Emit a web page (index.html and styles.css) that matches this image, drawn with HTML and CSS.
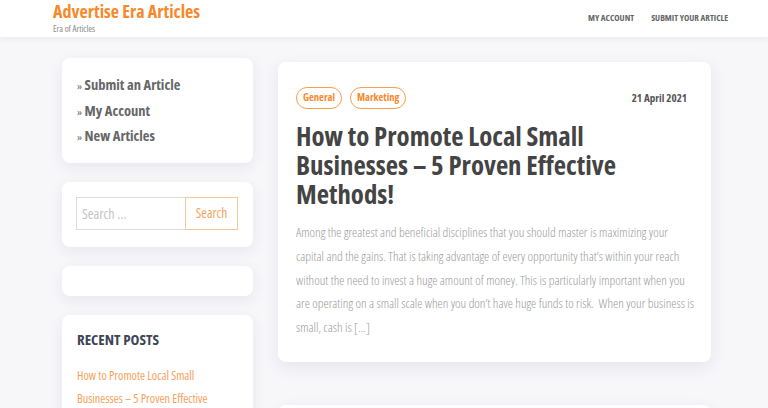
FILE: index.html
```html
<!DOCTYPE html>
<html lang="en">
<head>
	<meta charset="UTF-8">
	<title>Advertise Era Articles</title>
	<link rel="stylesheet" href="styles.css">
</head>
<body>

	<header class="site-header">
		<div class="site-brand">
			<a class="site-title" href="#">Advertise Era Articles</a>
			<div class="site-desc">Era of Articles</div>
		</div>
		<nav class="site-nav">
			<a href="#">My Account</a>
			<a href="#">Submit Your Article</a>
		</nav>
	</header>

	<div class="container">
		<aside class="sidebar">
			<div class="widget widget-links">
				<a href="#"><span class="raquo">»</span> Submit an Article</a>
				<a href="#"><span class="raquo">»</span> My Account</a>
				<a href="#"><span class="raquo">»</span> New Articles</a>
			</div>

			<div class="widget widget-search">
				<form class="search-form">
					<input type="text" class="search-field" placeholder="Search …" />
					<button type="button" class="search-submit">Search</button>
				</form>
			</div>

			<div class="widget widget-empty"></div>

			<div class="widget widget-recent">
				<h3 class="widget-title">Recent Posts</h3>
				<a href="#">How to Promote Local Small Businesses – 5 Proven Effective Methods!</a>
			</div>
		</aside>

		<main class="posts">
			<article class="post-card">
				<div class="post-meta">
					<div class="post-cats">
						<a class="cat" href="#">General</a>
						<a class="cat" href="#">Marketing</a>
					</div>
					<span class="post-date">21 April 2021</span>
				</div>
				<h2 class="post-title">How to Promote Local Small Businesses – 5 Proven Effective Methods!</h2>
				<p class="post-excerpt">Among the greatest and beneficial disciplines that you should master is maximizing your capital and the gains. That is taking advantage of every opportunity that’s within your reach without the need to invest a huge amount of money. This is particularly important when you are operating on a small scale when you don’t have huge funds to risk.&nbsp; When your business is small, cash is […]</p>
			</article>

			<article class="post-card"></article>
		</main>
	</div>

</body>
</html>
```

FILE: styles.css
```css
* {
	box-sizing: border-box;
}
html, body {
	margin: 0;
	padding: 0;
}
body {
	font-family: "Open Sans", "DejaVu Sans Condensed", sans-serif;
	font-stretch: 75%;
	background-color: #f7f7fa;
	color: #555;
	overflow: hidden;
}
a {
	text-decoration: none;
}

/* header */
.site-header {
	display: flex;
	justify-content: space-between;
	align-items: flex-start;
	height: 37px;
	padding: 1px 40px 0 53px;
	background-color: #fff;
	box-shadow: 0 2px 6px rgba(40, 40, 80, 0.06);
}
.site-title {
	display: block;
	font-size: 18px;
	font-weight: 700;
	line-height: 20px;
	color: #f7892a;
}
.site-desc {
	margin-top: 2px;
	font-size: 9px;
	line-height: 11px;
	color: #888;
}
.site-nav {
	display: flex;
	gap: 17px;
	padding-top: 10px;
}
.site-nav a {
	font-size: 9px;
	font-weight: 700;
	text-transform: uppercase;
	color: #666;
}

/* layout */
.container {
	display: flex;
	align-items: flex-start;
	gap: 25px;
	padding: 21px 0 0 62px;
}
.sidebar {
	display: flex;
	flex-direction: column;
	gap: 19px;
	width: 191px;
	flex-shrink: 0;
}
.widget {
	background-color: #fff;
	border-radius: 8px;
	box-shadow: 0 4px 14px rgba(40, 40, 90, 0.08);
}

.widget-links {
	display: flex;
	flex-direction: column;
	padding: 14px 15px 14px;
}
.widget-links a {
	font-size: 14.5px;
	font-weight: 700;
	line-height: 25.5px;
	color: #666;
}
.raquo {
	font-size: 11px;
	font-weight: 400;
	line-height: 1;
}

.widget-search {
	padding: 15px 15px 17px 14px;
}
.search-form {
	display: flex;
}
.search-field {
	width: 109px;
	height: 33px;
	padding: 0 5px;
	border: 1px solid #ddd;
	border-right: 0;
	font-family: inherit;
	font-stretch: 75%;
	font-size: 14px;
	color: #555;
	outline: none;
}
.search-field::placeholder {
	color: #c4c4c4;
}
.search-submit {
	width: 54px;
	height: 33px;
	border: 1px solid #f9c896;
	background-color: #fff;
	font-family: inherit;
	font-stretch: 75%;
	font-size: 13.5px;
	color: #f7a461;
}

.widget-empty {
	height: 30px;
}

.widget-recent {
	padding: 12px 15px 10px;
}
.widget-title {
	margin: 0 0 13px;
	font-size: 15px;
	font-weight: 700;
	line-height: 24px;
	text-transform: uppercase;
	color: #3d4656;
}
.widget-recent a {
	display: block;
	font-size: 12.2px;
	line-height: 23px;
	color: #f7a15b;
}

/* posts */
.posts {
	display: flex;
	flex-direction: column;
	gap: 43px;
	width: 433px;
	margin-top: 4px;
	flex-shrink: 0;
}
.post-card {
	min-height: 40px;
	padding: 25px 13px 22px 18px;
	background-color: #fff;
	border-radius: 8px;
	box-shadow: 0 5px 16px rgba(40, 40, 90, 0.09);
}
.post-meta {
	display: flex;
	justify-content: space-between;
	align-items: flex-start;
}
.post-cats {
	display: flex;
	gap: 8px;
}
.cat {
	display: inline-block;
	height: 22px;
	padding: 0 6px;
	border: 1.5px solid #f7a053;
	border-radius: 11px;
	font-size: 10.5px;
	font-weight: 700;
	line-height: 19px;
	color: #f7892a;
}
.post-date {
	margin-right: 11px;
	padding-top: 3px;
	font-size: 11px;
	font-weight: 700;
	color: #555;
}
.post-title {
	margin: 12px 0 13px;
	font-size: 26.8px;
	font-weight: 700;
	line-height: 29px;
	color: #444;
}
.post-excerpt {
	margin: 0;
	font-size: 13.1px;
	font-weight: 300;
	line-height: 23.8px;
	color: #9a9a9a;
}
```
